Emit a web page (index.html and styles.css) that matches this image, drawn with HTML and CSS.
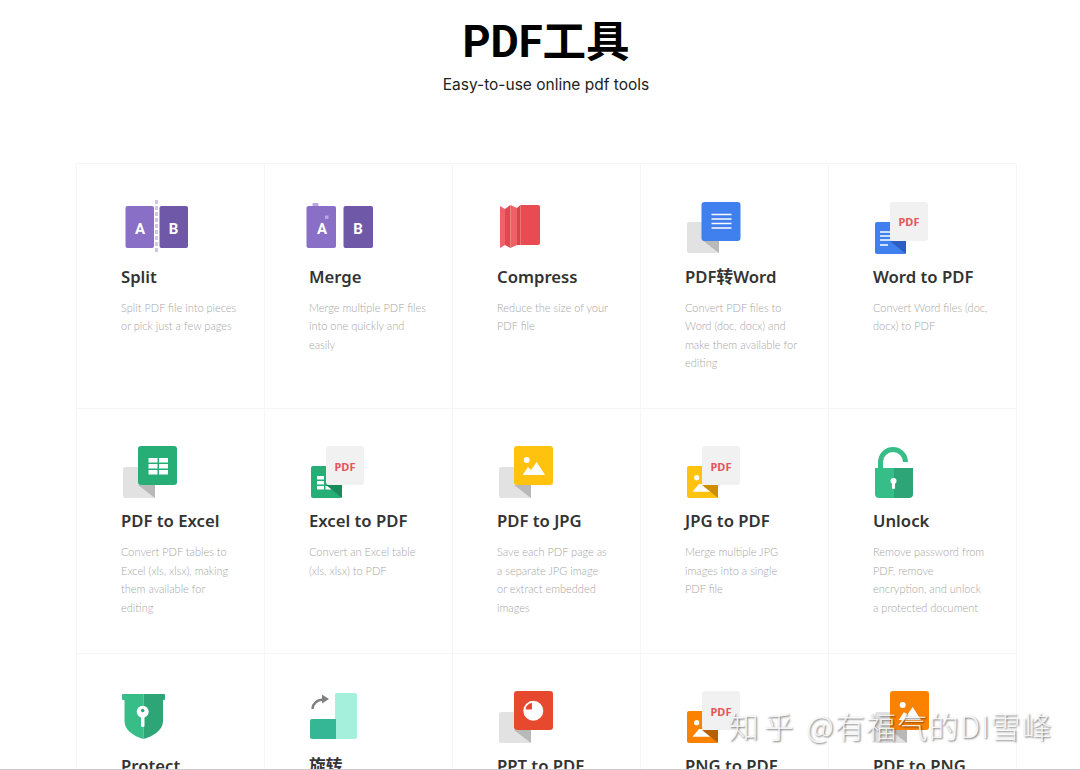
FILE: index.html
```html
<!DOCTYPE html>
<html lang="en">
<head>
    <meta charset="UTF-8">
    <meta name="viewport" content="width=device-width, initial-scale=1.0">
    <title>PDF工具</title>
    <link rel="stylesheet" href="styles.css">
</head>
<body>
    <div class="page">
        <header class="hero">
            <h1>PDF工具</h1>
            <p>Easy-to-use online pdf tools</p>
        </header>

        <main class="tools">
            <!-- Row 1 -->
            <a class="tool">
                <svg class="icon" viewBox="0 0 72 60">
                    <rect x="4.5" y="7" width="28.5" height="42" rx="2" fill="#8a6fc6"/>
                    <rect x="38.5" y="7" width="28.5" height="42" rx="2" fill="#6f58a8"/>
                    <path d="M35.5 1V55" stroke="#cfc5e6" stroke-width="3" stroke-dasharray="4 2"/>
                    <text class="icon-letter" x="19" y="34.5">A</text>
                    <text class="icon-letter" x="52.5" y="34.5">B</text>
                </svg>
                <h2>Split</h2>
                <p>Split PDF file into pieces or pick just a few pages</p>
            </a>
            <a class="tool">
                <svg class="icon" viewBox="0 0 72 60">
                    <rect x="3.5" y="4" width="6" height="4" rx="1" fill="#b9a6e2"/>
                    <rect x="-2.5" y="7" width="29.5" height="42" rx="2" fill="#8a6fc6"/>
                    <rect x="34.5" y="7" width="29.5" height="42" rx="2" fill="#6f58a8"/>
                    <rect x="16" y="16.5" width="3.5" height="3.5" fill="#b9a6e2"/>
                    <text class="icon-letter" x="13" y="34.5">A</text>
                    <text class="icon-letter" x="49" y="34.5">B</text>
                </svg>
                <h2>Merge</h2>
                <p>Merge multiple PDF files into one quickly and easily</p>
            </a>
            <a class="tool">
                <svg class="icon" viewBox="0 0 72 60">
                    <path d="M3 7L8 10V46L3 49Z" fill="#ee6167"/>
                    <path d="M8 10L13.5 6V49L8 46Z" fill="#de4a50"/>
                    <path d="M13.5 6L20 9V46L13.5 49Z" fill="#ee6167"/>
                    <path d="M20 9L23.5 6V46L20 46Z" fill="#d94449"/>
                    <path d="M23.5 6H41a2 2 0 0 1 2 2V44a2 2 0 0 1-2 2H23.5Z" fill="#e84c52"/>
                </svg>
                <h2>Compress</h2>
                <p>Reduce the size of your PDF file</p>
            </a>
            <a class="tool">
                <svg class="icon" viewBox="0 0 72 60">
                    <rect x="2" y="23" width="32" height="31" rx="2" fill="#e2e2e2"/>
                    <path d="M17 41H34V54Z" fill="#b9b9b9"/>
                    <rect x="16.5" y="3" width="39" height="39" rx="3" fill="#3f7fee"/>
                    <path d="M26.5 15.5H46.5M26.5 20H46.5M26.5 24.5H46.5M26.5 29H46.5" stroke="#fff" stroke-width="1.6"/>
                </svg>
                <h2>PDF转Word</h2>
                <p>Convert PDF files to Word (doc, docx) and make them available for editing</p>
            </a>
            <a class="tool">
                <svg class="icon" viewBox="0 0 72 60">
                    <rect x="2" y="23" width="31" height="32" rx="2" fill="#3f7fee"/>
                    <path d="M7 33H20M7 37H20M7 41H20M7 46H15" stroke="#fff" stroke-width="1.6"/>
                    <path d="M17 42H33V55Z" fill="#2c5fc4"/>
                    <rect x="17" y="3" width="38" height="39" rx="3" fill="#f1f1f1"/>
                    <text class="icon-pdf" x="36" y="27">PDF</text>
                </svg>
                <h2>Word to PDF</h2>
                <p>Convert Word files (doc, docx) to PDF</p>
            </a>

            <!-- Row 2 -->
            <a class="tool">
                <svg class="icon" viewBox="0 0 72 60">
                    <rect x="2" y="23" width="32" height="31" rx="2" fill="#e2e2e2"/>
                    <path d="M17 41H34V54Z" fill="#b9b9b9"/>
                    <rect x="17" y="2" width="39" height="39" rx="3" fill="#27ae77"/>
                    <path d="M27.5 14h9v4.5h-9zM38 14h9v4.5h-9zM27.5 20h9v4.5h-9zM38 20h9v4.5h-9zM27.5 26h9v4.5h-9zM38 26h9v4.5h-9z" fill="#fff"/>
                </svg>
                <h2>PDF to Excel</h2>
                <p>Convert PDF tables to Excel (xls, xlsx), making them available for editing</p>
            </a>
            <a class="tool">
                <svg class="icon" viewBox="0 0 72 60">
                    <rect x="2" y="22" width="31" height="32" rx="2" fill="#27ae77"/>
                    <path d="M8 32h7v3.5H8zM8 37h7v3.5H8zM8 42h7v3.5H8zM16.5 42h6v3.5h-6z" fill="#fff"/>
                    <path d="M17 41H33V54Z" fill="#1b8a5b"/>
                    <rect x="17" y="2" width="38" height="39" rx="3" fill="#f1f1f1"/>
                    <text class="icon-pdf" x="36" y="27">PDF</text>
                </svg>
                <h2>Excel to PDF</h2>
                <p>Convert an Excel table (xls, xlsx) to PDF</p>
            </a>
            <a class="tool">
                <svg class="icon" viewBox="0 0 72 60">
                    <rect x="2" y="23" width="32" height="31" rx="2" fill="#e2e2e2"/>
                    <path d="M17 41H34V54Z" fill="#b9b9b9"/>
                    <rect x="17" y="2" width="39" height="39" rx="3" fill="#ffc20e"/>
                    <circle cx="29.7" cy="16" r="3" fill="#fff"/>
                    <path d="M25.7 31L31 23L34 26L39.7 18L48 31Z" fill="#fff"/>
                </svg>
                <h2>PDF to JPG</h2>
                <p>Save each PDF page as a separate JPG image<br>or extract embedded<br>images</p>
            </a>
            <a class="tool">
                <svg class="icon" viewBox="0 0 72 60">
                    <rect x="2" y="22" width="31" height="32" rx="2" fill="#ffc20e"/>
                    <circle cx="11.7" cy="33.7" r="2.6" fill="#fff"/>
                    <path d="M7.5 47.7L14 40H22L27 47.7Z" fill="#fff"/>
                    <path d="M17 41H33V54Z" fill="#d18d00"/>
                    <rect x="17" y="2" width="38" height="39" rx="3" fill="#f1f1f1"/>
                    <text class="icon-pdf" x="36" y="27">PDF</text>
                </svg>
                <h2>JPG to PDF</h2>
                <p>Merge multiple JPG images into a single<br>PDF file</p>
            </a>
            <a class="tool">
                <svg class="icon" viewBox="0 0 72 60">
                    <path d="M7.5 25V18a12.5 12.5 0 0 1 25 0" fill="none" stroke="#37bd88" stroke-width="5"/>
                    <path d="M2 24H21V54H6a4 4 0 0 1-4-4Z" fill="#37bd88"/>
                    <path d="M21 24H40V50a4 4 0 0 1-4 4H21Z" fill="#2ea577"/>
                    <circle cx="20.5" cy="37" r="3" fill="#fff"/>
                    <rect x="19" y="38" width="3" height="7" rx="1" fill="#fff"/>
                </svg>
                <h2>Unlock</h2>
                <p>Remove password from PDF, remove<br>encryption, and unlock<br>a protected document</p>
            </a>

            <!-- Row 3, cut off by the window -->
            <a class="tool">
                <svg class="icon" viewBox="0 0 72 60">
                    <path d="M2 5H22.5V50C12 47 3.5 41 3.5 32V11H2A1 1 0 0 1 1 10V6A1 1 0 0 1 2 5Z" fill="#37bd88"/>
                    <path d="M22.5 5H43A1 1 0 0 1 44 6V10A1 1 0 0 1 43 11H42V32C42 41 33 47 22.5 50Z" fill="#2ea577"/>
                    <circle cx="21.7" cy="22.7" r="6" fill="#fff"/>
                    <rect x="20" y="25" width="3.5" height="13" rx="1.5" fill="#fff"/>
                    <circle cx="21.7" cy="21.5" r="1.7" fill="#2ea577"/>
                </svg>
                <h2>Protect</h2>
            </a>
            <a class="tool">
                <svg class="icon" viewBox="0 0 72 60">
                    <path d="M3.5 20C4 14 8 11 14 10.5" fill="none" stroke="#808080" stroke-width="2.5"/>
                    <path d="M13 5.5L20 10L13 14.5Z" fill="#808080"/>
                    <rect x="26" y="4" width="22" height="46" rx="2" fill="#a5f0dd"/>
                    <path d="M3 30H27V50H3a2 2 0 0 1-2-2V32a2 2 0 0 1 2-2Z" fill="#35b795"/>
                </svg>
                <h2>旋转</h2>
            </a>
            <a class="tool">
                <svg class="icon" viewBox="0 0 72 60">
                    <rect x="2" y="23" width="32" height="31" rx="2" fill="#e2e2e2"/>
                    <path d="M17 41H34V54Z" fill="#b9b9b9"/>
                    <rect x="17" y="2" width="39" height="39" rx="3" fill="#e6492d"/>
                    <circle cx="36.3" cy="21.7" r="10" fill="#fff"/>
                    <path d="M35 20.5V14A7 7 0 0 0 28.5 20.5Z" fill="#e6492d"/>
                </svg>
                <h2>PPT to PDF</h2>
            </a>
            <a class="tool">
                <svg class="icon" viewBox="0 0 72 60">
                    <rect x="2" y="22" width="31" height="32" rx="2" fill="#fb8200"/>
                    <circle cx="11.7" cy="33.7" r="2.6" fill="#fff"/>
                    <path d="M7.5 47.7L14 40H22L27 47.7Z" fill="#fff"/>
                    <path d="M17 41H33V54Z" fill="#b85f00"/>
                    <rect x="17" y="2" width="38" height="39" rx="3" fill="#f1f1f1"/>
                    <text class="icon-pdf" x="36" y="27">PDF</text>
                </svg>
                <h2>PNG to PDF</h2>
            </a>
            <a class="tool">
                <svg class="icon" viewBox="0 0 72 60">
                    <rect x="2" y="23" width="32" height="31" rx="2" fill="#e2e2e2"/>
                    <path d="M17 41H34V54Z" fill="#b9b9b9"/>
                    <rect x="17" y="2" width="39" height="39" rx="3" fill="#fb8200"/>
                    <circle cx="29.7" cy="16" r="3" fill="#fff"/>
                    <path d="M25.7 31L31 23L34 26L39.7 18L48 31Z" fill="#fff"/>
                </svg>
                <h2>PDF to PNG</h2>
            </a>
        </main>

        <div class="watermark"><span class="watermark-site">知乎</span> @有福气的DI雪峰</div>
    </div>
</body>
</html>
```

FILE: styles.css
```css
* {
    box-sizing: border-box;
}

body {
    margin: 0;
    background: #fff;
    font-family: "Noto Sans", "Noto Sans CJK SC", sans-serif;
}

.page {
    position: relative;
    height: 770px;
    padding-left: 12px;
    overflow: hidden;
    border-bottom: 1px solid #ccc;
}

.hero {
    height: 163px;
    padding-top: 18px;
    text-align: center;
}

.hero h1 {
    margin: 0;
    font-family: Roboto, "Noto Sans CJK SC", sans-serif;
    font-size: 43.5px;
    line-height: 50px;
    font-weight: 700;
    color: #000;
}

.hero p {
    margin: 5px 0 0;
    font-family: Inter, sans-serif;
    font-size: 15.5px;
    line-height: 24px;
    color: #222;
}

.tools {
    width: 940px;
    margin: 0 auto;
    display: grid;
    grid-template-columns: repeat(5, 188px);
    grid-auto-rows: 245px;
    border-top: 1px solid #f6f6f6;
    border-left: 1px solid #f6f6f6;
}

.tool {
    display: block;
    padding: 35px 0 0 44px;
    border-right: 1px solid #f6f6f6;
    border-bottom: 1px solid #f6f6f6;
}

.icon {
    display: block;
    width: 72px;
    height: 60px;
    overflow: visible;
}

.icon-letter {
    font-family: Roboto, sans-serif;
    font-size: 15px;
    font-weight: 700;
    fill: #fff;
    text-anchor: middle;
}

.icon-pdf {
    font-family: "Noto Sans", sans-serif;
    font-size: 11px;
    font-weight: 700;
    fill: #e8535a;
    text-anchor: middle;
}

.tool h2 {
    margin: 6px 0 0;
    font-size: 16.7px;
    line-height: 24px;
    font-weight: 600;
    color: #333;
}

.tool p {
    width: 118px;
    margin: 9.6px 0 0;
    font-family: Lato, sans-serif;
    font-size: 11px;
    line-height: 18.5px;
    font-weight: 300;
    color: #a6a6a6;
}

/* rows below the first sit a pixel higher under their icons */
.tool:nth-child(n+6) h2 {
    margin-top: 5px;
}

.tool:nth-child(n+6) p {
    margin-top: 10px;
}

.watermark {
    position: absolute;
    right: 27px;
    top: 704px;
    font-family: "Noto Sans CJK SC", sans-serif;
    font-size: 30px;
    line-height: 42px;
    font-weight: 300;
    letter-spacing: 1.2px;
    color: rgba(255, 255, 255, 0.85);
    text-shadow: 1px 1px 2px rgba(0, 0, 0, 0.55);
    white-space: nowrap;
}

.watermark-site {
    letter-spacing: 5px;
}
```
